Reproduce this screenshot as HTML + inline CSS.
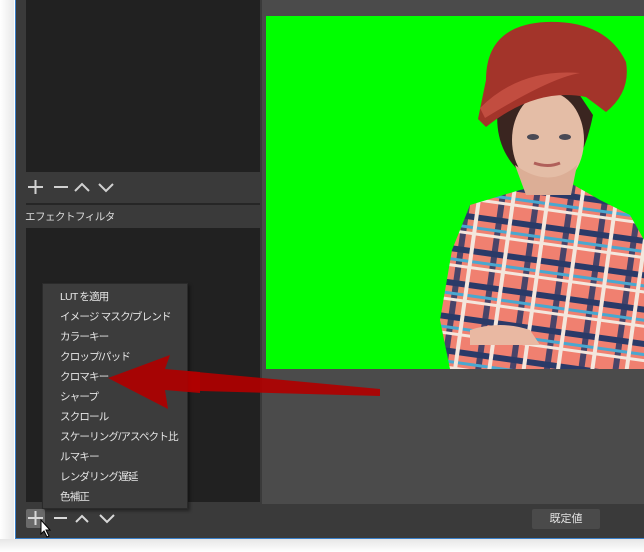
<!DOCTYPE html>
<html><head><meta charset="utf-8"><style>
html,body{margin:0;padding:0;width:644px;height:552px;overflow:hidden;background:#fff;font-family:"Liberation Sans","Noto Sans CJK JP",sans-serif;}
.a{position:absolute}
.menu div{height:20px;line-height:20px;padding-left:17px;font-size:10.5px;color:#e6e6e6;letter-spacing:-0.8px;white-space:nowrap}
</style></head><body>
<div class="a" style="left:0;top:0;width:14px;height:540px;background:linear-gradient(90deg,#fff,#e8e8e8)"></div>
<div class="a" style="left:15px;top:0;width:629px;height:538px;background:#3a3a3a;border-left:1px solid #3a7fc8;border-bottom:1px solid #3a7fc8"></div>
<div class="a" style="left:0;top:539px;width:644px;height:13px;background:linear-gradient(#e6e6e6,#fff)"></div>
<div class="a" style="left:26px;top:0;width:234px;height:172px;background:#212121"></div>
<svg class="a" style="left:26px;top:178px" width="100" height="18"><g stroke="#d0d0d0" stroke-width="2" fill="none"><path d="M2 9h15M9.5 2v14M28 9h14M49 13l7-7 7 7M73 6l7 7 7-7"/></g></svg>
<div class="a" style="left:26px;top:203px;width:234px;height:2px;background:#262626"></div>
<div class="a" style="left:25px;top:209px;font-size:10.5px;color:#dcdcdc;letter-spacing:-0.5px">エフェクトフィルタ</div>
<div class="a" style="left:26px;top:228px;width:234px;height:274px;background:#212121"></div>
<div class="a" style="left:26px;top:509px;width:19px;height:19px;background:#6a6a6a;border-radius:2px"></div>
<svg class="a" style="left:26px;top:509px" width="100" height="18"><g stroke="#d8d8d8" stroke-width="2" fill="none"><path d="M2 9h15M9.5 2v14M28 9h13M50 13l6-6 6 6M74 6l7 7 7-7"/></g></svg>
<svg class="a" style="left:40px;top:519px" width="14" height="20"><path d="M1 1v14l3-3 3 6 2-1-3-6h4z" fill="#fff" stroke="#000" stroke-width="1"/></svg>
<div class="a" style="left:262px;top:0;width:382px;height:504px;background:#4b4b4b"></div>
<div class="a" style="left:266px;top:16px;width:378px;height:353px;background:#00ff00;overflow:hidden">
<svg width="378" height="353" viewBox="266 16 378 353">
<defs><pattern id="pl" width="34" height="34" patternUnits="userSpaceOnUse" patternTransform="rotate(8)">
<rect width="34" height="34" fill="#f08070"/>
<rect x="0" y="10" width="34" height="6" fill="#2a3a68"/>
<rect x="12" y="0" width="6" height="34" fill="#2a3a68" opacity=".85"/>
<rect x="0" y="22" width="34" height="3" fill="#49a8d0"/>
<rect x="24" y="0" width="4" height="34" fill="#f4e6dc"/>
<rect x="0" y="28" width="34" height="3" fill="#f4e6dc"/>
</pattern></defs>
<path d="M452 250 L470 205 L520 190 L565 180 L600 200 L630 215 L644 240 L644 369 L450 369 L440 320 Z" fill="url(#pl)"/>
<path d="M470 330 q30-10 60 0 l10 15 h-70z" fill="#e9b8a2"/>
<path d="M498 105 q-5 40 20 65 l40 15 q25-20 35-70 l-20-30 -60 0z" fill="#3a2520"/>
<ellipse cx="548" cy="140" rx="36" ry="48" fill="#e4bda6"/>
<path d="M515 165 q35 25 62 0 l-6 30 -45 0z" fill="#dcae96"/>
<ellipse cx="533" cy="137" rx="6" ry="3" fill="#4a4a55"/><ellipse cx="565" cy="137" rx="6" ry="3" fill="#4a4a55"/>
<path d="M534 163 q14 5 26 0" stroke="#b0605a" stroke-width="3" fill="none"/>
<path d="M486 80 q0-55 60-58 q60-2 80 40 q5 30-20 50 l-20-15 q-50-10-100 30 l-8-8z" fill="#a3342a"/>
<path d="M480 108 q40-40 100-35 q-30 5-95 45z" fill="#c24d40"/>
</svg></div>
<svg class="a" style="left:0;top:0" width="644" height="552"><path d="M108 378 L170 355 L165 369 L380 389 L380 396 L165 390 L168 409 Z" fill="#b00000" opacity=".92"/></svg>
<div class="a" style="left:262px;top:504px;width:382px;height:34px;background:#3a3a3a"></div>
<div class="a" style="left:532px;top:509px;width:68px;height:20px;background:#4a4a4a;border-radius:2px;color:#e0e0e0;font-size:11px;line-height:20px;text-align:center">既定値</div>
<div class="a menu" style="left:42px;top:283px;width:146px;height:226px;background:#3c3c3c;border:1px solid #2a2a2a;box-shadow:2px 2px 3px rgba(0,0,0,.4);padding-top:3px;box-sizing:border-box">
<div>LUT を適用</div><div>イメージ マスク/ブレンド</div><div>カラーキー</div><div>クロップ/パッド</div><div>クロマキー</div><div>シャープ</div><div>スクロール</div><div>スケーリング/アスペクト比</div><div>ルマキー</div><div>レンダリング遅延</div><div>色補正</div>
</div>
<svg class="a" style="left:0;top:0" width="644" height="552"><path d="M108 378 L170 355 L165 369 L200 372 L200 393 L165 390 L168 409 Z" fill="#b00000" opacity=".92"/></svg>
</body></html>
